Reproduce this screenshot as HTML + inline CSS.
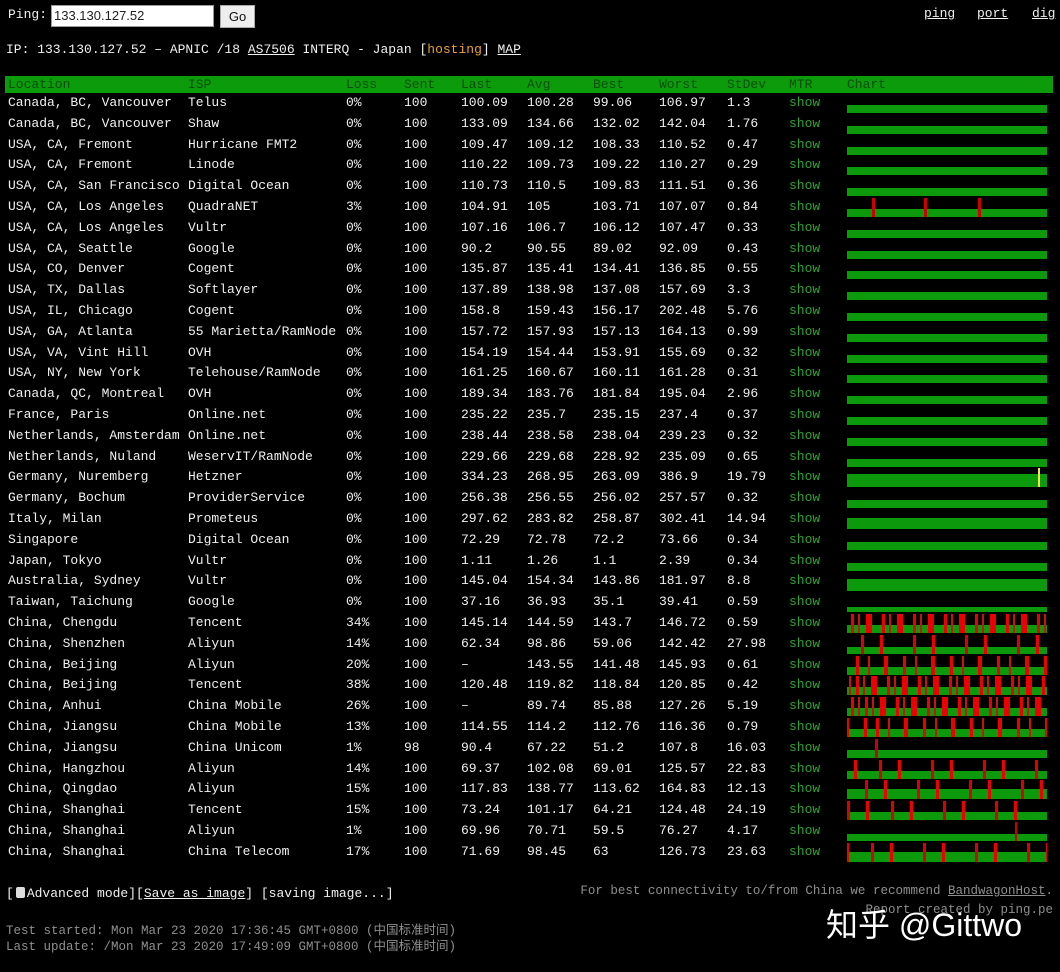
<!DOCTYPE html>
<html><head><meta charset="utf-8">
<style>
html,body{margin:0;padding:0;background:#000;}
body{width:1060px;height:972px;position:relative;overflow:hidden;font-family:"Liberation Mono","Noto Sans CJK SC",monospace;font-size:13px;color:#f0f0f0;}
.a{position:absolute;white-space:nowrap;}
u{text-decoration:underline;}
.hdr{position:absolute;left:5px;top:76px;width:1048px;height:17px;background:#0b9b0b;}
.row{position:absolute;left:0;width:1060px;height:20.8px;line-height:20px;}
.row span,.hdr span{position:absolute;top:0;white-space:nowrap;}
.hdr span{color:#0a4f0a;line-height:17px;}
.s{color:#2ea32e;}
.c0{left:8px}.c1{left:188px}.c2{left:346px}.c3{left:404px}.c4{left:461px}.c5{left:527px}.c6{left:593px}.c7{left:659px}.c8{left:727px}.c9{left:789px}
.hdr .c0{left:3px}.hdr .c1{left:183px}.hdr .c2{left:341px}.hdr .c3{left:399px}.hdr .c4{left:456px}.hdr .c5{left:522px}.hdr .c6{left:588px}.hdr .c7{left:654px}.hdr .c8{left:722px}.hdr .c9{left:784px}.hdr .c10{left:842px}
.ch{position:absolute;left:847px;top:12px;width:200px;height:8px;background:#0c9a0c;}
.rd{position:absolute;left:847px;top:1px;width:200px;height:19px;}
.d1{background:repeating-linear-gradient(90deg,transparent 0 4px,#e00 4px 7px,transparent 7px 11px,#c11 11px 13px,transparent 13px 19px,#e00 19px 25px,transparent 25px 31px);}
.d2{background:repeating-linear-gradient(90deg,transparent 0 9px,#e00 9px 12px,transparent 12px 21px,#c11 21px 23px,transparent 23px 37px,#e00 37px 41px,transparent 41px 47px);}
.d3{background:repeating-linear-gradient(90deg,transparent 0 14px,#d00 14px 17px,transparent 17px 33px,#e00 33px 36px,transparent 36px 52px);}
.footg{color:#8f8f8f;font-size:12.5px;}
</style></head><body>
<div class="a" style="left:8px;top:7px">Ping:</div>
<div class="a" style="left:51px;top:5px;width:159px;height:20px;background:#fff;border:1px solid #999;color:#222;font-family:'Liberation Sans',sans-serif;font-size:13px;line-height:20px;padding-left:2px;">133.130.127.52</div>
<div class="a" style="left:220px;top:5px;width:33px;height:21px;background:#eee;border:1px solid #aaa;color:#111;font-family:'Liberation Sans',sans-serif;font-size:13px;line-height:21px;text-align:center;">Go</div>
<div class="a" style="left:924px;top:6px"><u>ping</u></div>
<div class="a" style="left:977px;top:6px"><u>port</u></div>
<div class="a" style="left:1032px;top:6px"><u>dig</u></div>
<div class="a" style="left:6px;top:42px">IP: 133.130.127.52 – APNIC /18 <u>AS7506</u> INTERQ - Japan [<span style="color:#e8a030">hosting</span>] <u>MAP</u></div>
<div class="hdr"><span class="c0">Location</span><span class="c1">ISP</span><span class="c2">Loss</span><span class="c3">Sent</span><span class="c4">Last</span><span class="c5">Avg</span><span class="c6">Best</span><span class="c7">Worst</span><span class="c8">StDev</span><span class="c9">MTR</span><span class="c10">Chart</span></div>

<div class="row" style="top:93px"><span class="c0">Canada, BC, Vancouver</span><span class="c1">Telus</span><span class="c2">0%</span><span class="c3">100</span><span class="c4">100.09</span><span class="c5">100.28</span><span class="c6">99.06</span><span class="c7">106.97</span><span class="c8">1.3</span><span class="c9 s">show</span><div class="ch"></div></div>
<div class="row" style="top:113.8px"><span class="c0">Canada, BC, Vancouver</span><span class="c1">Shaw</span><span class="c2">0%</span><span class="c3">100</span><span class="c4">133.09</span><span class="c5">134.66</span><span class="c6">132.02</span><span class="c7">142.04</span><span class="c8">1.76</span><span class="c9 s">show</span><div class="ch"></div></div>
<div class="row" style="top:134.6px"><span class="c0">USA, CA, Fremont</span><span class="c1">Hurricane FMT2</span><span class="c2">0%</span><span class="c3">100</span><span class="c4">109.47</span><span class="c5">109.12</span><span class="c6">108.33</span><span class="c7">110.52</span><span class="c8">0.47</span><span class="c9 s">show</span><div class="ch"></div></div>
<div class="row" style="top:155.4px"><span class="c0">USA, CA, Fremont</span><span class="c1">Linode</span><span class="c2">0%</span><span class="c3">100</span><span class="c4">110.22</span><span class="c5">109.73</span><span class="c6">109.22</span><span class="c7">110.27</span><span class="c8">0.29</span><span class="c9 s">show</span><div class="ch"></div></div>
<div class="row" style="top:176.2px"><span class="c0">USA, CA, San Francisco</span><span class="c1">Digital Ocean</span><span class="c2">0%</span><span class="c3">100</span><span class="c4">110.73</span><span class="c5">110.5</span><span class="c6">109.83</span><span class="c7">111.51</span><span class="c8">0.36</span><span class="c9 s">show</span><div class="ch"></div></div>
<div class="row" style="top:197px"><span class="c0">USA, CA, Los Angeles</span><span class="c1">QuadraNET</span><span class="c2">3%</span><span class="c3">100</span><span class="c4">104.91</span><span class="c5">105</span><span class="c6">103.71</span><span class="c7">107.07</span><span class="c8">0.84</span><span class="c9 s">show</span><div class="ch"></div><div class="rd" style="background:linear-gradient(90deg,transparent 25px,#c00 25px 28px,transparent 28px 77px,#c00 77px 80px,transparent 80px 131px,#c00 131px 134px,transparent 134px)"></div></div>
<div class="row" style="top:217.8px"><span class="c0">USA, CA, Los Angeles</span><span class="c1">Vultr</span><span class="c2">0%</span><span class="c3">100</span><span class="c4">107.16</span><span class="c5">106.7</span><span class="c6">106.12</span><span class="c7">107.47</span><span class="c8">0.33</span><span class="c9 s">show</span><div class="ch"></div></div>
<div class="row" style="top:238.6px"><span class="c0">USA, CA, Seattle</span><span class="c1">Google</span><span class="c2">0%</span><span class="c3">100</span><span class="c4">90.2</span><span class="c5">90.55</span><span class="c6">89.02</span><span class="c7">92.09</span><span class="c8">0.43</span><span class="c9 s">show</span><div class="ch"></div></div>
<div class="row" style="top:259.4px"><span class="c0">USA, CO, Denver</span><span class="c1">Cogent</span><span class="c2">0%</span><span class="c3">100</span><span class="c4">135.87</span><span class="c5">135.41</span><span class="c6">134.41</span><span class="c7">136.85</span><span class="c8">0.55</span><span class="c9 s">show</span><div class="ch"></div></div>
<div class="row" style="top:280.2px"><span class="c0">USA, TX, Dallas</span><span class="c1">Softlayer</span><span class="c2">0%</span><span class="c3">100</span><span class="c4">137.89</span><span class="c5">138.98</span><span class="c6">137.08</span><span class="c7">157.69</span><span class="c8">3.3</span><span class="c9 s">show</span><div class="ch"></div></div>
<div class="row" style="top:301px"><span class="c0">USA, IL, Chicago</span><span class="c1">Cogent</span><span class="c2">0%</span><span class="c3">100</span><span class="c4">158.8</span><span class="c5">159.43</span><span class="c6">156.17</span><span class="c7">202.48</span><span class="c8">5.76</span><span class="c9 s">show</span><div class="ch"></div></div>
<div class="row" style="top:321.8px"><span class="c0">USA, GA, Atlanta</span><span class="c1">55 Marietta/RamNode</span><span class="c2">0%</span><span class="c3">100</span><span class="c4">157.72</span><span class="c5">157.93</span><span class="c6">157.13</span><span class="c7">164.13</span><span class="c8">0.99</span><span class="c9 s">show</span><div class="ch"></div></div>
<div class="row" style="top:342.6px"><span class="c0">USA, VA, Vint Hill</span><span class="c1">OVH</span><span class="c2">0%</span><span class="c3">100</span><span class="c4">154.19</span><span class="c5">154.44</span><span class="c6">153.91</span><span class="c7">155.69</span><span class="c8">0.32</span><span class="c9 s">show</span><div class="ch"></div></div>
<div class="row" style="top:363.4px"><span class="c0">USA, NY, New York</span><span class="c1">Telehouse/RamNode</span><span class="c2">0%</span><span class="c3">100</span><span class="c4">161.25</span><span class="c5">160.67</span><span class="c6">160.11</span><span class="c7">161.28</span><span class="c8">0.31</span><span class="c9 s">show</span><div class="ch"></div></div>
<div class="row" style="top:384.2px"><span class="c0">Canada, QC, Montreal</span><span class="c1">OVH</span><span class="c2">0%</span><span class="c3">100</span><span class="c4">189.34</span><span class="c5">183.76</span><span class="c6">181.84</span><span class="c7">195.04</span><span class="c8">2.96</span><span class="c9 s">show</span><div class="ch"></div></div>
<div class="row" style="top:405px"><span class="c0">France, Paris</span><span class="c1">Online.net</span><span class="c2">0%</span><span class="c3">100</span><span class="c4">235.22</span><span class="c5">235.7</span><span class="c6">235.15</span><span class="c7">237.4</span><span class="c8">0.37</span><span class="c9 s">show</span><div class="ch"></div></div>
<div class="row" style="top:425.8px"><span class="c0">Netherlands, Amsterdam</span><span class="c1">Online.net</span><span class="c2">0%</span><span class="c3">100</span><span class="c4">238.44</span><span class="c5">238.58</span><span class="c6">238.04</span><span class="c7">239.23</span><span class="c8">0.32</span><span class="c9 s">show</span><div class="ch"></div></div>
<div class="row" style="top:446.6px"><span class="c0">Netherlands, Nuland</span><span class="c1">WeservIT/RamNode</span><span class="c2">0%</span><span class="c3">100</span><span class="c4">229.66</span><span class="c5">229.68</span><span class="c6">228.92</span><span class="c7">235.09</span><span class="c8">0.65</span><span class="c9 s">show</span><div class="ch"></div></div>
<div class="row" style="top:467.4px"><span class="c0">Germany, Nuremberg</span><span class="c1">Hetzner</span><span class="c2">0%</span><span class="c3">100</span><span class="c4">334.23</span><span class="c5">268.95</span><span class="c6">263.09</span><span class="c7">386.9</span><span class="c8">19.79</span><span class="c9 s">show</span><div class="ch" style="top:7px;height:13px"></div><div class="rd" style="background:linear-gradient(90deg,transparent 191px,#ee4 191px 193px,transparent 193px)"></div></div>
<div class="row" style="top:488.2px"><span class="c0">Germany, Bochum</span><span class="c1">ProviderService</span><span class="c2">0%</span><span class="c3">100</span><span class="c4">256.38</span><span class="c5">256.55</span><span class="c6">256.02</span><span class="c7">257.57</span><span class="c8">0.32</span><span class="c9 s">show</span><div class="ch"></div></div>
<div class="row" style="top:509px"><span class="c0">Italy, Milan</span><span class="c1">Prometeus</span><span class="c2">0%</span><span class="c3">100</span><span class="c4">297.62</span><span class="c5">283.82</span><span class="c6">258.87</span><span class="c7">302.41</span><span class="c8">14.94</span><span class="c9 s">show</span><div class="ch" style="top:9px;height:11px"></div></div>
<div class="row" style="top:529.8px"><span class="c0">Singapore</span><span class="c1">Digital Ocean</span><span class="c2">0%</span><span class="c3">100</span><span class="c4">72.29</span><span class="c5">72.78</span><span class="c6">72.2</span><span class="c7">73.66</span><span class="c8">0.34</span><span class="c9 s">show</span><div class="ch"></div></div>
<div class="row" style="top:550.6px"><span class="c0">Japan, Tokyo</span><span class="c1">Vultr</span><span class="c2">0%</span><span class="c3">100</span><span class="c4">1.11</span><span class="c5">1.26</span><span class="c6">1.1</span><span class="c7">2.39</span><span class="c8">0.34</span><span class="c9 s">show</span><div class="ch"></div></div>
<div class="row" style="top:571.4px"><span class="c0">Australia, Sydney</span><span class="c1">Vultr</span><span class="c2">0%</span><span class="c3">100</span><span class="c4">145.04</span><span class="c5">154.34</span><span class="c6">143.86</span><span class="c7">181.97</span><span class="c8">8.8</span><span class="c9 s">show</span><div class="ch" style="top:8px;height:12px"></div></div>
<div class="row" style="top:592.2px"><span class="c0">Taiwan, Taichung</span><span class="c1">Google</span><span class="c2">0%</span><span class="c3">100</span><span class="c4">37.16</span><span class="c5">36.93</span><span class="c6">35.1</span><span class="c7">39.41</span><span class="c8">0.59</span><span class="c9 s">show</span><div class="ch" style="top:15px;height:5px"></div></div>
<div class="row" style="top:613px"><span class="c0">China, Chengdu</span><span class="c1">Tencent</span><span class="c2">34%</span><span class="c3">100</span><span class="c4">145.14</span><span class="c5">144.59</span><span class="c6">143.7</span><span class="c7">146.72</span><span class="c8">0.59</span><span class="c9 s">show</span><div class="ch"></div><div class="rd d1"></div></div>
<div class="row" style="top:633.8px"><span class="c0">China, Shenzhen</span><span class="c1">Aliyun</span><span class="c2">14%</span><span class="c3">100</span><span class="c4">62.34</span><span class="c5">98.86</span><span class="c6">59.06</span><span class="c7">142.42</span><span class="c8">27.98</span><span class="c9 s">show</span><div class="ch" style="top:13px;height:7px"></div><div class="rd d3"></div></div>
<div class="row" style="top:654.6px"><span class="c0">China, Beijing</span><span class="c1">Aliyun</span><span class="c2">20%</span><span class="c3">100</span><span class="c4">–</span><span class="c5">143.55</span><span class="c6">141.48</span><span class="c7">145.93</span><span class="c8">0.61</span><span class="c9 s">show</span><div class="ch"></div><div class="rd d2"></div></div>
<div class="row" style="top:675.4px"><span class="c0">China, Beijing</span><span class="c1">Tencent</span><span class="c2">38%</span><span class="c3">100</span><span class="c4">120.48</span><span class="c5">119.82</span><span class="c6">118.84</span><span class="c7">120.85</span><span class="c8">0.42</span><span class="c9 s">show</span><div class="ch"></div><div class="rd d1" style="background-position:5px 0"></div></div>
<div class="row" style="top:696.2px"><span class="c0">China, Anhui</span><span class="c1">China Mobile</span><span class="c2">26%</span><span class="c3">100</span><span class="c4">–</span><span class="c5">89.74</span><span class="c6">85.88</span><span class="c7">127.26</span><span class="c8">5.19</span><span class="c9 s">show</span><div class="ch"></div><div class="rd d1" style="background-position:14px 0"></div></div>
<div class="row" style="top:717px"><span class="c0">China, Jiangsu</span><span class="c1">China Mobile</span><span class="c2">13%</span><span class="c3">100</span><span class="c4">114.55</span><span class="c5">114.2</span><span class="c6">112.76</span><span class="c7">116.36</span><span class="c8">0.79</span><span class="c9 s">show</span><div class="ch"></div><div class="rd d2" style="background-position:20px 0"></div></div>
<div class="row" style="top:737.8px"><span class="c0">China, Jiangsu</span><span class="c1">China Unicom</span><span class="c2">1%</span><span class="c3">98</span><span class="c4">90.4</span><span class="c5">67.22</span><span class="c6">51.2</span><span class="c7">107.8</span><span class="c8">16.03</span><span class="c9 s">show</span><div class="ch" style="top:12px;height:8px"></div><div class="rd" style="background:linear-gradient(90deg,transparent 28px,#c00 28px 31px,transparent 31px)"></div></div>
<div class="row" style="top:758.6px"><span class="c0">China, Hangzhou</span><span class="c1">Aliyun</span><span class="c2">14%</span><span class="c3">100</span><span class="c4">69.37</span><span class="c5">102.08</span><span class="c6">69.01</span><span class="c7">125.57</span><span class="c8">22.83</span><span class="c9 s">show</span><div class="ch"></div><div class="rd d3" style="background-position:18px 0"></div></div>
<div class="row" style="top:779.4px"><span class="c0">China, Qingdao</span><span class="c1">Aliyun</span><span class="c2">15%</span><span class="c3">100</span><span class="c4">117.83</span><span class="c5">138.77</span><span class="c6">113.62</span><span class="c7">164.83</span><span class="c8">12.13</span><span class="c9 s">show</span><div class="ch" style="top:10px;height:10px"></div><div class="rd d3" style="background-position:4px 0"></div></div>
<div class="row" style="top:800.2px"><span class="c0">China, Shanghai</span><span class="c1">Tencent</span><span class="c2">15%</span><span class="c3">100</span><span class="c4">73.24</span><span class="c5">101.17</span><span class="c6">64.21</span><span class="c7">124.48</span><span class="c8">24.19</span><span class="c9 s">show</span><div class="ch" style="top:12px;height:8px"></div><div class="rd d3" style="background-position:30px 0"></div></div>
<div class="row" style="top:821px"><span class="c0">China, Shanghai</span><span class="c1">Aliyun</span><span class="c2">1%</span><span class="c3">100</span><span class="c4">69.96</span><span class="c5">70.71</span><span class="c6">59.5</span><span class="c7">76.27</span><span class="c8">4.17</span><span class="c9 s">show</span><div class="ch" style="top:13px;height:7px"></div><div class="rd" style="background:linear-gradient(90deg,transparent 168px,#c00 168px 170px,transparent 170px)"></div></div>
<div class="row" style="top:841.8px"><span class="c0">China, Shanghai</span><span class="c1">China Telecom</span><span class="c2">17%</span><span class="c3">100</span><span class="c4">71.69</span><span class="c5">98.45</span><span class="c6">63</span><span class="c7">126.73</span><span class="c8">23.63</span><span class="c9 s">show</span><div class="ch" style="top:10px;height:10px"></div><div class="rd d3" style="background-position:10px 0"></div></div>

<div class="a" style="left:6px;top:886px">[<span style="display:inline-block;width:9px;height:11px;background:#ddd;border-radius:2px;vertical-align:-1px;margin:0 2px 0 2px"></span>Advanced mode][<u>Save as image</u>] [saving image...]</div>
<div class="a footg" style="right:7px;top:884px">For best connectivity to/from China we recommend <u>BandwagonHost</u>.</div>
<div class="a footg" style="right:7px;top:903px">Report created by ping.pe</div>
<div class="a footg" style="left:6px;top:919px">Test started: Mon Mar 23 2020 17:36:45 GMT+0800 (中国标准时间)</div>
<div class="a footg" style="left:6px;top:935px">Last update: /Mon Mar 23 2020 17:49:09 GMT+0800 (中国标准时间)</div>
<div class="a" style="left:826px;top:904px;font-family:'Liberation Sans','Noto Sans CJK SC',sans-serif;font-size:32px;color:#fff;line-height:42px">知乎 @Gittwo</div>
</body></html>
